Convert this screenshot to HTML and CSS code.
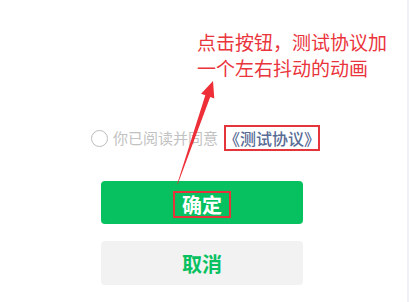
FILE: index.html
```html
<!DOCTYPE html>
<html lang="zh-CN">
<head>
<meta charset="utf-8">
<title>协议抖动</title>
<link rel="stylesheet" href="styles.css">
</head>
<body>
<div class="page">
  <div class="content">
    <p class="note">点击按钮，测试协议加<br>一个左右抖动的动画</p>
    <div class="agree">
      <span class="radio"></span>
      <span class="agree-text">你已阅读并同意</span>
      <span class="agree-link">《测试协议》</span>
    </div>
    <div class="btn btn-primary"><span class="mark">确定</span></div>
    <div class="btn btn-default">取消</div>
  </div>
  <div class="edge"></div>
  <svg class="arrow" width="409" height="302" viewBox="0 0 409 302">
    <polygon fill="#ee2f37" points="213,81 214.3,98.6 210.2,97 177.8,184 177.2,184 205.3,95.3 201.1,93.7"/>
  </svg>
</div>
</body>
</html>
```
FILE: styles.css
```css
html, body {
  margin: 0;
  padding: 0;
  background: #ffffff;
}
body {
  font-family: "Noto Sans CJK SC", "Noto Sans", sans-serif;
}
.page {
  position: relative;
  width: 409px;
  height: 302px;
  display: flex;
  overflow: hidden;
}
.content {
  flex: 1;
  padding-top: 29px;
}
.edge {
  width: 2px;
  background: #eff1f7;
}
.note {
  margin: 0 0 0 197px;
  font-size: 19px;
  line-height: 26px;
  color: #ea343c;
  white-space: nowrap;
}
.agree {
  display: flex;
  align-items: center;
  margin: 44px 0 0 91px;
  height: 26px;
}
.radio {
  box-sizing: border-box;
  width: 17px;
  height: 17px;
  border: 1px solid #bcbcbc;
  border-radius: 50%;
}
.agree-text {
  margin-left: 5px;
  font-size: 15px;
  color: #c2c2c2;
  line-height: 26px;
}
.agree-link {
  margin-left: 6px;
  font-size: 16px;
  font-weight: 500;
  line-height: 26px;
  width: 96px;
  color: #576b95;
  outline: 2px solid #e5353b;
  outline-offset: -2px;
  white-space: nowrap;
}
.btn {
  margin-left: 101px;
  width: 202px;
  border-radius: 4px;
  display: flex;
  align-items: center;
  justify-content: center;
  font-size: 20px;
  font-weight: bold;
}
.btn-primary {
  margin-top: 30px;
  height: 43px;
  background: #07c160;
  color: #ffffff;
}
.btn-default {
  margin-top: 17px;
  height: 44px;
  background: #f2f2f2;
  color: #07c160;
}
.mark {
  border: 2px solid #e5353b;
  padding: 0 7px;
  line-height: 23px;
  margin-top: 4px;
}
.arrow {
  position: absolute;
  left: 0;
  top: 0;
  pointer-events: none;
}
```
